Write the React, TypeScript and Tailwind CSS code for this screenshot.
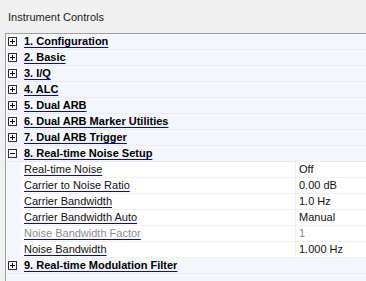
import React from 'react';

type Prop = { label: string; value: string; disabled?: boolean };

const categories = [
  '1. Configuration',
  '2. Basic',
  '3. I/Q',
  '4. ALC',
  '5. Dual ARB',
  '6. Dual ARB Marker Utilities',
  '7. Dual ARB Trigger',
];

const noiseProps: Prop[] = [
  { label: 'Real-time Noise', value: 'Off' },
  { label: 'Carrier to Noise Ratio', value: '0.00 dB' },
  { label: 'Carrier Bandwidth', value: '1.0 Hz' },
  { label: 'Carrier Bandwidth Auto', value: 'Manual' },
  { label: 'Noise Bandwidth Factor', value: '1', disabled: true },
  { label: 'Noise Bandwidth', value: '1.000 Hz' },
];

function ExpandBox({ open }: { open?: boolean }) {
  return (
    <svg width="9" height="9" viewBox="0 0 9 9" className="shrink-0">
      <rect x="0.5" y="0.5" width="8" height="8" fill="#fff" stroke="#333" />
      <line x1="2" y1="4.5" x2="7" y2="4.5" stroke="#000" />
      {!open && <line x1="4.5" y1="2" x2="4.5" y2="7" stroke="#000" />}
    </svg>
  );
}

function CategoryRow({ title, open }: { title: string; open?: boolean }) {
  return (
    <div className="flex h-[16px] items-center border-b border-[#e8ecf1] pl-[2px]">
      <ExpandBox open={open} />
      <span className="ml-[7px] text-[11px] font-bold leading-none text-black underline decoration-[#0000ff] underline-offset-2">
        {title}
      </span>
    </div>
  );
}

function PropRow({ prop }: { prop: Prop }) {
  const color = prop.disabled ? 'text-[#8c8c8c]' : 'text-[#111]';
  return (
    <div className="flex h-[16px] pl-[15px]">
      <div className="flex flex-1 border-b border-[#eef1f5] bg-white">
        <div className="flex w-[275px] items-center border-r border-[#eef1f5] pl-[3px]">
          <span className={`text-[11px] leading-none underline decoration-[#0000ff] underline-offset-2 ${color}`}>
            {prop.label}
          </span>
        </div>
        <div className={`flex items-center pl-[3px] text-[11px] leading-none ${color}`}>{prop.value}</div>
      </div>
    </div>
  );
}

export default function App() {
  return (
    <div className="h-[281px] w-[366px] overflow-hidden bg-[#f0f0f0] font-['Liberation_Sans',sans-serif]">
      <div className="h-[33px] pl-[8px] pt-[12px] text-[11px] leading-none text-[#1e1e1e]">Instrument Controls</div>
      <div className="ml-[5px] h-[248px] border-l border-t border-[#a0a0a0] bg-[#f3f6fb]">
        {categories.map((c) => (
          <CategoryRow key={c} title={c} />
        ))}
        <CategoryRow title="8. Real-time Noise Setup" open />
        {noiseProps.map((p) => (
          <PropRow key={p.label} prop={p} />
        ))}
        <CategoryRow title="9. Real-time Modulation Filter" />
      </div>
    </div>
  );
}
